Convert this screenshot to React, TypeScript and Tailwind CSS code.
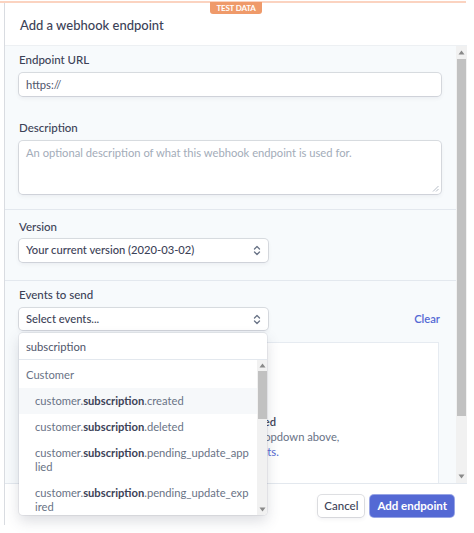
import React from 'react';

const ring = 'shadow-[0_0_0_1px_rgba(60,66,87,0.16),0_2px_4px_rgba(60,66,87,0.08)]';

const Chevrons = () => (
  <svg width="8" height="11" viewBox="0 0 8 11" fill="none" stroke="#697386" strokeWidth="1.3" strokeLinecap="round" strokeLinejoin="round">
    <path d="M1.5 4 L4 1.5 L6.5 4" />
    <path d="M1.5 7 L4 9.5 L6.5 7" />
  </svg>
);

const Arrow = ({ up }: { up?: boolean }) => (
  <svg width="7" height="5" viewBox="0 0 7 5">
    <path d={up ? 'M0.5 4.5 L3.5 0.5 L6.5 4.5 Z' : 'M0.5 0.5 L3.5 4.5 L6.5 0.5 Z'} fill="#8a8a8a" />
  </svg>
);

const Label = ({ children }: { children: React.ReactNode }) => (
  <div className="h-[16px] leading-[16px] text-[11.5px] font-medium text-[#3c4257]">{children}</div>
);

const Item = ({ suffix, active }: { suffix: React.ReactNode; active?: boolean }) => (
  <div className={`pl-[16px] pr-[4px] py-[6px] text-[11.2px] leading-[14px] text-[#697386] ${active ? 'bg-[#f6f8fa]' : ''}`}>
    customer.<span className="font-bold text-[#3c4257]">subscription</span>.{suffix}
  </div>
);

export default function App() {
  return (
    <div className="w-[474px] h-[533px] bg-white relative overflow-hidden font-['Lato',sans-serif]">
      <div className="w-[466px] h-[2px] mt-[1px] bg-[#fbd3c0]" />
      <div className="absolute left-[210px] top-[2px] w-[52px] h-[12px] rounded-b-[3px] bg-[#ef9a6a] text-white text-[8px] font-bold leading-[12px] text-center tracking-tight">
        TEST DATA
      </div>

      <div className="ml-[4px] w-[463px] h-[522px] border-l border-[#d9dce1] flex flex-col">
        <div className="h-[42px] shrink-0 pl-[15px] pt-[13px] text-[13px] leading-[18px] font-medium text-[#3c4257]">
          Add a webhook endpoint
        </div>

        <div className="h-[438px] shrink-0 flex bg-[#f7fafc] border-t border-[#edf0f3]">
          <div className="flex-1 overflow-hidden">
            <div className="px-[14px] pt-[6px] pb-[15px]">
              <Label>Endpoint URL</Label>
              <div className={`mt-[5px] h-[23px] w-[422px] rounded-[4px] bg-white ${ring} px-[7px] text-[11.2px] leading-[23px] text-[#4f566b]`}>
                https://
              </div>
              <div className="mt-[24px]">
                <Label>Description</Label>
              </div>
              <div className={`mt-[5px] h-[53px] w-[422px] rounded-[4px] bg-white ${ring} px-[7px] pt-[4px] text-[11.2px] leading-[16px] text-[#a3acb9] relative`}>
                An optional description of what this webhook endpoint is used for.
                <svg className="absolute right-[2px] bottom-[2px]" width="7" height="7" viewBox="0 0 7 7" stroke="#a3acb9" strokeWidth="0.8">
                  <path d="M1 6.5 L6.5 1 M4 6.5 L6.5 4" />
                </svg>
              </div>
            </div>
            <div className="border-t border-[#e3e8ee]" />
            <div className="px-[14px] pt-[9px] pb-[18px]">
              <Label>Version</Label>
              <div className={`mt-[4px] h-[23px] w-[249px] rounded-[4px] bg-white ${ring} pl-[7px] pr-[7px] flex items-center justify-between text-[11.2px] font-medium text-[#3c4257]`}>
                <span>Your current version (2020-03-02)</span>
                <Chevrons />
              </div>
            </div>
            <div className="border-t border-[#e3e8ee]" />
            <div className="px-[14px] pt-[6px]">
              <Label>Events to send</Label>
              <div className="mt-[5px] flex items-center justify-between w-[422px]">
                <div className={`h-[22px] w-[249px] rounded-[4px] bg-white ${ring} px-[7px] flex items-center justify-between text-[11.2px] font-medium text-[#3c4257]`}>
                  <span>Select events...</span>
                  <Chevrons />
                </div>
                <span className="text-[11.2px] font-semibold text-[#5469d4] pr-[1px]">Clear</span>
              </div>
              <div className="mt-[12px] h-[160px] w-[420px] bg-white border border-[#e6ebf1] flex flex-col items-center pt-[71px] text-[11.2px] leading-[15px] text-[#697386] text-center">
                <div className="font-semibold text-[#3c4257]">No events selected</div>
                <div>Search for events using the dropdown above,</div>
                <div>
                  or <span className="text-[#5469d4]">receive all events.</span>
                </div>
              </div>
            </div>
          </div>
          <div className="w-[11px] shrink-0 bg-[#f1f1f1] flex flex-col items-center">
            <div className="h-[13px] flex items-center justify-center">
              <Arrow up />
            </div>
            <div className="w-[9px] h-[357px] bg-[#c1c1c1]" />
            <div className="flex-1" />
            <div className="h-[14px] flex items-center justify-center">
              <Arrow />
            </div>
          </div>
        </div>

        <div className="h-[42px] shrink-0 border-t border-[#e3e8ee] flex items-center justify-end gap-[6px] pr-[13px] pt-[2px]">
          <button className={`h-[22px] px-[6px] rounded-[4px] bg-white ${ring} text-[11.5px] font-medium text-[#3c4257]`}>
            Cancel
          </button>
          <button className="h-[22px] px-[7px] rounded-[4px] bg-[#5469d4] shadow-[0_0_0_1px_rgba(84,105,212,0.6)] text-[11.5px] font-bold text-white">
            Add endpoint
          </button>
        </div>
      </div>

      <div className="absolute left-[19px] top-[333px] w-[248px] h-[182px] bg-white rounded-[4px] shadow-[0_0_0_1px_rgba(60,66,87,0.08),0_6px_14px_rgba(60,66,87,0.18)] flex flex-col overflow-hidden">
        <div className="h-[27px] shrink-0 border-b border-[#e3e8ee] px-[7px] text-[11.2px] leading-[27px] text-[#4f566b]">
          subscription
        </div>
        <div className="flex-1 flex overflow-hidden">
          <div className="flex-1 overflow-hidden">
            <div className="h-[28px] pl-[7px] text-[11.2px] leading-[29px] text-[#697386]">Customer</div>
            <Item suffix="created" active />
            <Item suffix="deleted" />
            <Item
              suffix={
                <>
                  pending_update_app
                  <br />
                  lied
                </>
              }
            />
            <Item
              suffix={
                <>
                  pending_update_exp
                  <br />
                  ired
                </>
              }
            />
          </div>
          <div className="w-[10px] shrink-0 bg-[#f1f1f1] flex flex-col items-center">
            <div className="h-[11px] flex items-center justify-center">
              <Arrow up />
            </div>
            <div className="w-[9px] h-[48px] bg-[#c1c1c1]" />
            <div className="flex-1" />
            <div className="h-[12px] flex items-center justify-center">
              <Arrow />
            </div>
          </div>
        </div>
      </div>
    </div>
  );
}
